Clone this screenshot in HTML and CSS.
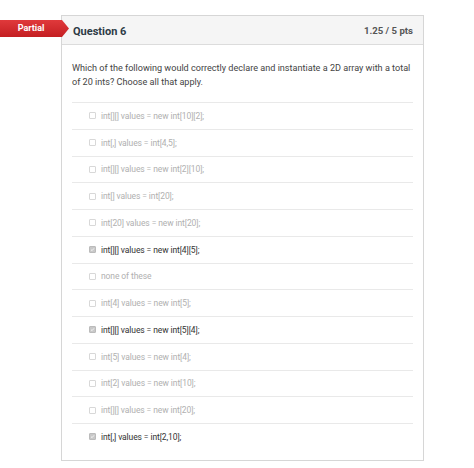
FILE: index.html
```html
<!DOCTYPE html>
<html>
<head>
<meta charset="utf-8">
<link rel="stylesheet" href="styles.css">
</head>
<body>
<div class="page">
  <div class="flag">Partial</div>
  <div class="card">
    <div class="card-header">
      <span class="title">Question 6</span>
      <span class="pts">1.25 / 5 pts</span>
    </div>
    <div class="card-body">
      <p class="question">Which of the following would correctly declare and instantiate a 2D array with a total of 20 ints? Choose all that apply.</p>
      <ul class="answers">
        <li class="answer"><span class="box"></span>int[][] values = new int[10][2];</li>
        <li class="answer"><span class="box"></span>int[,] values = int[4,5];</li>
        <li class="answer"><span class="box"></span>int[][] values = new int[2][10];</li>
        <li class="answer"><span class="box"></span>int[] values = int[20];</li>
        <li class="answer"><span class="box"></span>int[20] values = new int[20];</li>
        <li class="answer checked"><span class="box"><svg viewBox="0 0 8 8"><path d="M1.6 4.2 L3.3 5.8 L6.4 2.2" fill="none" stroke="#fff" stroke-width="1.2"/></svg></span>int[][] values = new int[4][5];</li>
        <li class="answer"><span class="box"></span>none of these</li>
        <li class="answer"><span class="box"></span>int[4] values = new int[5];</li>
        <li class="answer checked"><span class="box"><svg viewBox="0 0 8 8"><path d="M1.6 4.2 L3.3 5.8 L6.4 2.2" fill="none" stroke="#fff" stroke-width="1.2"/></svg></span>int[][] values = new int[5][4];</li>
        <li class="answer"><span class="box"></span>int[5] values = new int[4];</li>
        <li class="answer"><span class="box"></span>int[2] values = new int[10];</li>
        <li class="answer"><span class="box"></span>int[][] values = new int[20];</li>
        <li class="answer checked"><span class="box"><svg viewBox="0 0 8 8"><path d="M1.6 4.2 L3.3 5.8 L6.4 2.2" fill="none" stroke="#fff" stroke-width="1.2"/></svg></span>int[,] values = int[2,10];</li>
      </ul>
    </div>
  </div>
</div>
</body>
</html>
```

FILE: styles.css
```css
html, body {
  margin: 0;
  padding: 0;
  background: #fff;
}
body {
  font-family: Roboto, "Liberation Sans", sans-serif;
  color: #333;
}
.page {
  position: relative;
  padding: 15px 0 0 61px;
  width: 474px;
  height: 468px;
  box-sizing: border-box;
}
.flag {
  position: absolute;
  left: 0;
  top: 20px;
  width: 69px;
  height: 17px;
  box-sizing: border-box;
  padding-right: 7px;
  background: linear-gradient(#e0393b, #c41f22);
  clip-path: polygon(0 0, 62px 0, 69px 50%, 62px 100%, 0 100%);
  color: #fff;
  font-weight: 700;
  font-size: 9px;
  line-height: 17px;
  text-align: center;
  z-index: 2;
}
.card {
  width: 363px;
  height: 446px;
  box-sizing: border-box;
  border: 1px solid #d6d6d6;
  display: flex;
  flex-direction: column;
}
.card-header {
  height: 28px;
  background: #f5f5f5;
  border-bottom: 1px solid #dcdcdc;
  display: flex;
  align-items: center;
  justify-content: space-between;
  padding: 0 10px 0 11px;
}
.title {
  font-weight: 700;
  font-size: 11px;
  color: #2d3b45;
  margin-top: 3px;
}
.pts {
  font-weight: 700;
  font-size: 9.6px;
  color: #555;
}
.card-body {
  padding: 16px 10px 0 10px;
}
.question {
  margin: 0 0 13px 0;
  font-size: 9.1px;
  line-height: 14px;
  color: #444;
}
.answers {
  list-style: none;
  margin: 0;
  padding: 0;
}
.answer {
  height: 26.75px;
  box-sizing: border-box;
  border-top: 1px solid #e9e9e9;
  display: flex;
  align-items: center;
  padding-left: 17px;
  font-size: 8.5px;
  letter-spacing: -0.1px;
  color: #b0b0b0;
}
.box {
  width: 7px;
  height: 7px;
  box-sizing: border-box;
  border: 1px solid #d8d8d8;
  border-radius: 1px;
  margin-right: 5px;
  display: flex;
  background: #fff;
}
.box svg {
  width: 100%;
  height: 100%;
}
.answer.checked {
  color: #333;
}
.answer.checked .box {
  background: #c8c8c8;
  border-color: #bbb;
}
```
